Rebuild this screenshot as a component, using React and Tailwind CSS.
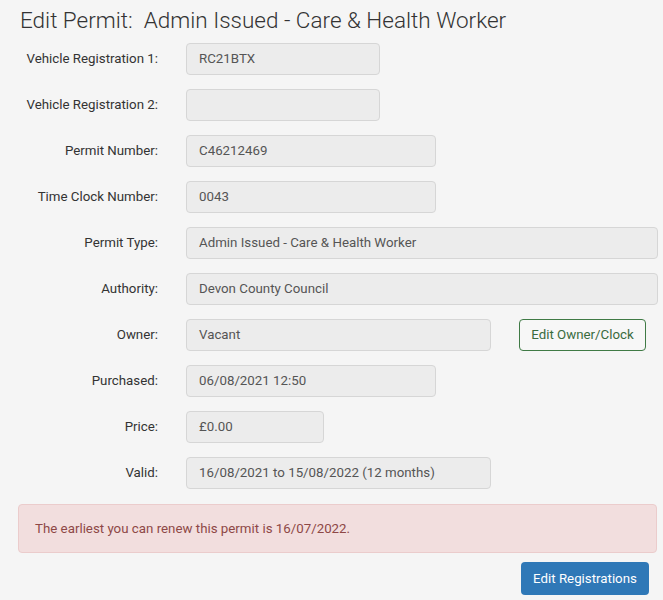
const rows = [
  { label: "Vehicle Registration 1:", value: "RC21BTX", width: "w-[194px]" },
  { label: "Vehicle Registration 2:", value: "", width: "w-[194px]" },
  { label: "Permit Number:", value: "C46212469", width: "w-[250px]" },
  { label: "Time Clock Number:", value: "0043", width: "w-[250px]" },
  { label: "Permit Type:", value: "Admin Issued - Care & Health Worker", width: "w-[472px]" },
  { label: "Authority:", value: "Devon County Council", width: "w-[472px]" },
  { label: "Owner:", value: "Vacant", width: "w-[305px]", action: "Edit Owner/Clock" },
  { label: "Purchased:", value: "06/08/2021 12:50", width: "w-[250px]" },
  { label: "Price:", value: "£0.00", width: "w-[138px]" },
  { label: "Valid:", value: "16/08/2021 to 15/08/2022 (12 months)", width: "w-[305px]" },
];

function FieldRow({ label, value, width, action }) {
  return (
    <div className="flex items-center h-[32px] mb-[14px]">
      <div className="w-[158px] text-right text-[13.3px] text-[#333]">{label}</div>
      <div
        className={`ml-[28px] ${width} h-[32px] flex items-center px-[12px] rounded-[4px] border border-[#d6d6d6] bg-[#ececec] text-[13.3px] text-[#555]`}
      >
        {value}
      </div>
      {action && (
        <button className="ml-[28px] h-[32px] w-[127px] rounded-[4px] border border-[#3f7a45] bg-[#f7f7f7] text-[13.3px] text-[#3a6b3e]">
          {action}
        </button>
      )}
    </div>
  );
}

export default function App() {
  return (
    <div className="w-[663px] h-[600px] bg-[#f5f5f5] overflow-hidden font-['Roboto',sans-serif]">
      <h1 className="pl-[20px] pt-[5px] h-[43px] text-[22.5px] leading-[30px] font-light text-[#333] whitespace-pre">
        Edit Permit:  Admin Issued - Care &amp; Health Worker
      </h1>

      <div className="flex flex-col">
        {rows.map((r) => (
          <FieldRow key={r.label} {...r} />
        ))}
      </div>

      <div className="ml-[18px] mr-[6px] mt-[1px] h-[49px] flex items-center px-[16px] rounded-[4px] border border-[#ebcccc] bg-[#f2dede] text-[13.3px] text-[#8e4846]">
        The earliest you can renew this permit is 16/07/2022.
      </div>

      <div className="flex justify-end pr-[14px] mt-[9px]">
        <button className="h-[33px] w-[128px] rounded-[4px] bg-[#2f78b7] text-[13.3px] text-white">
          Edit Registrations
        </button>
      </div>
    </div>
  );
}
